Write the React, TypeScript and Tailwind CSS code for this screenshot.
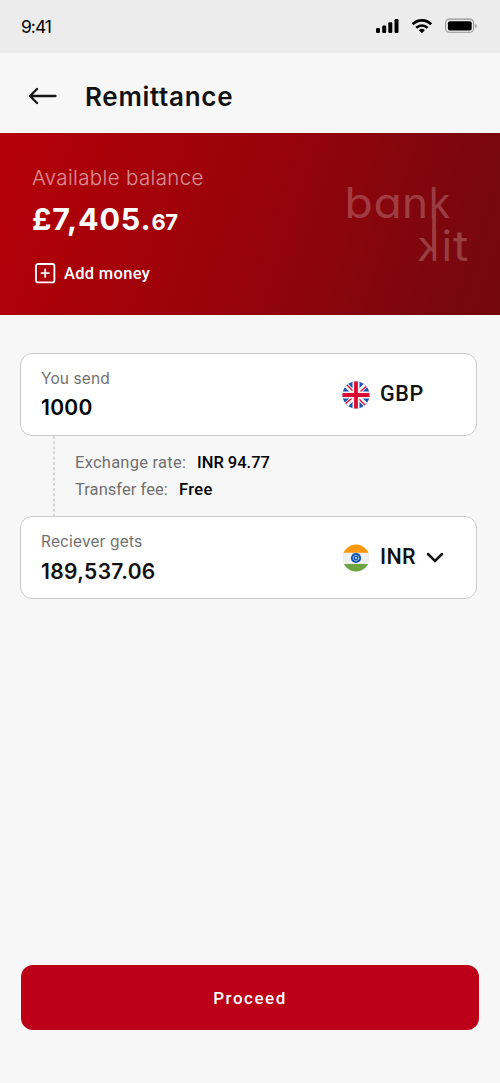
import type { ReactNode } from "react";

export type CurrencyCardProps = {
  label: string;
  amount: string;
  amountClass: string;
  labelClass: string;
  children: ReactNode;
};

function StatusBar() {
  return (
    <div className="flex h-[53px] items-center justify-between bg-[#ececec] pl-[21px] pr-[22px] text-black">
      <span className="font-[Inter] text-[17.5px] leading-5 font-normal tracking-[-1px]">9:41</span>
      <svg width="103" height="20" viewBox="0 0 103 20" fill="none">
        <g fill="#000">
          <rect x="1" y="11" width="4" height="5" rx="1.2" />
          <rect x="7.2" y="8.5" width="4" height="7.5" rx="1.2" />
          <rect x="13.3" y="5.3" width="4" height="10.7" rx="1.2" />
          <rect x="19.5" y="2" width="4" height="14" rx="1.2" />
        </g>
        <g stroke="#000" strokeWidth="2.7">
          <path d="M37.6 7.2a13 13 0 0 1 18.6 0" />
          <path d="M41.2 10.9a8 8 0 0 1 11.4 0" />
        </g>
        <path d="M46.9 16.2l-3-3a4.3 4.3 0 0 1 6 0z" fill="#000" />
        <rect x="70.6" y="2.1" width="28" height="13.2" rx="3.8" stroke="#929292" strokeWidth="1.1" />
        <rect x="72.9" y="4.2" width="23.8" height="9.2" rx="2" fill="#000" />
        <path d="M100.2 6.5c1.8.8 1.8 4 0 4.8z" fill="#929292" />
      </svg>
    </div>
  );
}

// the two k's share one stem, the lower one is mirrored
function Logo() {
  return (
    <svg
      className="h-[90px] w-[130px] overflow-visible opacity-[.22]"
      viewBox="0 0 130 90"
      fill="#fff"
      fontFamily="Inter, sans-serif"
      fontSize="42"
      fontWeight="400"
      style={{ fontFeatureSettings: '"cv11"' }}
    >
      <text transform="translate(2.6 38) scale(1.1 1)">b</text>
      <text transform="translate(31.4 38) scale(1.1 1)">a</text>
      <text transform="translate(60 38) scale(1.05 1)">n</text>
      <text transform="translate(87.1 38) scale(.92 1)">k</text>
      <rect x="90.2" y="30" width="3.8" height="40" />
      <text transform="translate(97.1 81) scale(-.92 1)">k</text>
      <text x="99.8" y="81">i</text>
      <text transform="translate(111 81) scale(1.12 1)">t</text>
    </svg>
  );
}

function BritishFlag() {
  return (
    <svg width="28" height="28" viewBox="0 0 28 28">
      <clipPath id="gb"><circle cx="14" cy="14" r="13.5" /></clipPath>
      <g clipPath="url(#gb)">
        <path fill="#1554b5" d="M0 0h28v28H0z" />
        <path d="M2 2l24 24M26 2L2 26" stroke="#f3f3f3" strokeWidth="4.8" />
        <path d="M3 2l8 8M27 3l-9 8M1 25l9-8M17 18l8 8" stroke="#dc1236" strokeWidth="1.3" />
        <path d="M14 0v28M0 14h28" stroke="#f3f3f3" strokeWidth="7" />
        <path d="M14 0v28M0 14h28" stroke="#dc0a32" strokeWidth="3.8" />
      </g>
    </svg>
  );
}

function IndianFlag() {
  return (
    <svg width="28" height="28" viewBox="0 0 28 28">
      <clipPath id="in"><circle cx="14" cy="14" r="13.5" /></clipPath>
      <g clipPath="url(#in)">
        <path fill="#f0f0f0" d="M0 0h28v28H0z" />
        <path fill="#ff9911" d="M0 0h28v8.7H0z" />
        <path fill="#6da544" d="M0 20h28v8H0z" />
      </g>
      <circle cx="14" cy="14" r="5.1" fill="#0c50b2" />
      <circle cx="14" cy="14" r="2.8" fill="#0c50b2" stroke="#e8eef6" strokeWidth=".9" strokeDasharray="2.2 .7" />
      <circle cx="14" cy="14" r="1" fill="#e8eef6" />
    </svg>
  );
}

function CurrencyCard({ label, amount, amountClass, labelClass, children }: CurrencyCardProps) {
  return (
    <section className="flex h-[83px] w-[457px] rounded-[12px] border-[1.5px] border-[#cbcbcb] bg-white pl-[20px]">
      <div className="w-[301px] pt-[15px]">
        <p className={labelClass}>{label}</p>
        <p className={amountClass}>{amount}</p>
      </div>
      <div className="flex h-full items-center text-[21px] font-medium text-[#111]">{children}</div>
    </section>
  );
}

export default function App() {
  return (
    <main className="flex h-[1083px] w-[500px] flex-col bg-[#f7f7f7] font-[Roboto,sans-serif] text-[#111]">
      <StatusBar />
      <header className="flex h-[80px] items-center pt-[6px] pl-[28px]">
        <svg width="30" height="20" viewBox="0 0 30 20" fill="none" stroke="#151515" strokeWidth="2.3" strokeLinecap="round" strokeLinejoin="round">
          <path d="M27.5 10H2M9 3L2 10l7 7" />
        </svg>
        <h1 className="ml-[27px] pt-px font-[Inter] text-[26px] leading-[32px] font-semibold tracking-[0.7px]">Remittance</h1>
      </header>

      <section className="flex h-[182px] bg-[linear-gradient(108deg,#b50008_0%,#98030b_50%,#7a070d_88%,#74080d_100%)] pl-[32px] text-white">
        <div className="w-[310px] pt-[32px]">
          <p className="font-[Inter] text-[20.5px] leading-[26px] font-light tracking-[0.35px] text-white/55">Available balance</p>
          <p className="mt-[9px] font-[Inter] text-[30.5px] leading-[38px] font-bold tracking-[0.8px]">
            £7,405.<span className="text-[22px] tracking-[-0.4px]">67</span>
          </p>
          <button className="mt-[22px] flex items-center pl-[3px]">
            <svg width="21" height="21" viewBox="0 0 21 21" fill="none" stroke="#fff" strokeWidth="1.8" strokeLinecap="round">
              <rect x="1" y="1" width="18.4" height="18.4" rx="2" />
              <path d="M10.2 6.5v7.4M6.5 10.2h7.4" />
            </svg>
            <span className="ml-[8px] text-[16.5px] leading-5 font-medium tracking-[0.3px]">Add money</span>
          </button>
        </div>
        <div className="pt-[47px]">
          <Logo />
        </div>
      </section>

      <div className="flex flex-col pt-[38px] pl-[20px]">
        <CurrencyCard
          label="You send"
          amount="1000"
          labelClass="font-[Inter] text-[15.5px] leading-5 tracking-[0.1px] text-[#707070]"
          amountClass="mt-[7px] font-[Inter] text-[21px] leading-6 font-semibold tracking-[0.3px] text-black"
        >
          <BritishFlag />
          <span className="ml-[10px] text-[21.5px] tracking-[0.7px]">GBP</span>
        </CurrencyCard>

        <div className="flex h-[80px] pl-[33px]">
          <svg width="2" height="80" viewBox="0 0 2 80">
            <path d="M1 0v80" stroke="#cbcbcb" strokeWidth="1.5" strokeDasharray="3 2.2" />
          </svg>
          <dl className="pt-[14px] pl-[20px] text-[16.5px] leading-[26.5px]">
            <div className="flex">
              <dt className="w-[122px] tracking-[0.25px] text-[#707070]">Exchange rate:</dt>
              <dd className="font-medium text-black">INR 94.77</dd>
            </div>
            <div className="flex">
              <dt className="w-[104px] tracking-[0.05px] text-[#707070]">Transfer fee:</dt>
              <dd className="font-medium tracking-[0.4px] text-black">Free</dd>
            </div>
          </dl>
        </div>

        <CurrencyCard
          label="Reciever gets"
          amount="189,537.06"
          labelClass="font-[Inter] text-[15.5px] leading-5 tracking-[0.15px] text-[#707070]"
          amountClass="mt-[8px] font-[Inter] text-[21px] leading-6 font-semibold tracking-[0.35px]"
        >
          <IndianFlag />
          <span className="ml-[10px] text-[21.5px] tracking-[0.3px]">INR</span>
          <svg className="ml-[10px]" width="18" height="12" viewBox="0 0 18 12" fill="none" stroke="#111" strokeWidth="2.5" strokeLinecap="round">
            <path d="M2 2l7 7 7-7" />
          </svg>
        </CurrencyCard>
      </div>

      <button className="mt-auto mb-[53px] ml-[21px] h-[65px] w-[458px] rounded-[12px] bg-[#bc0018] pt-[3px] text-[17px] font-medium tracking-[1.5px] text-white">
        Proceed
      </button>
    </main>
  );
}
